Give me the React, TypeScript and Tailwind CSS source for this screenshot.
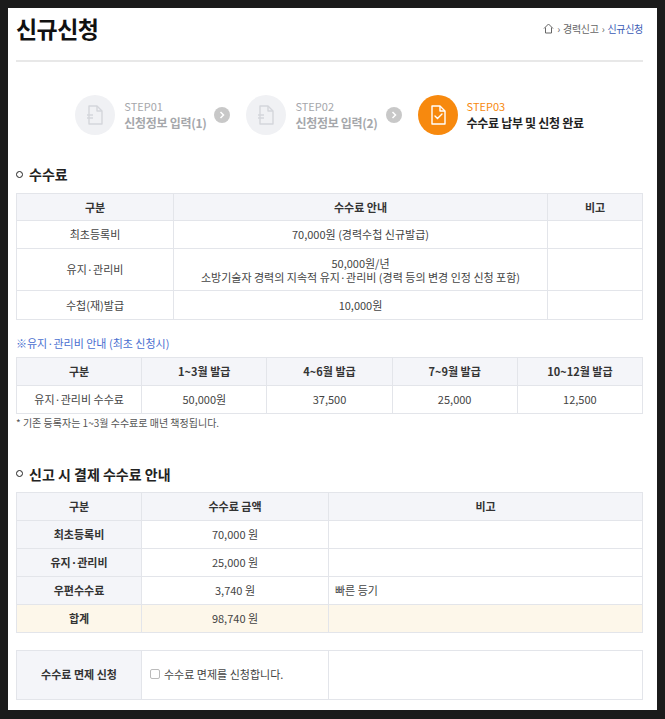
import React from "react";

const F = { fontFamily: '"Noto Sans CJK KR", "Noto Sans", sans-serif' };

function DocIcon({ color, check }: { color: string; check?: boolean }) {
  return (
    <svg width="20" height="22" viewBox="0 0 20 22" fill="none" stroke={color} strokeWidth="1.4">
      <path d="M4 2h8l5 5v13H4z" strokeLinejoin="round" />
      <path d="M12 2v5h5" strokeLinejoin="round" />
      {check ? <path d="M7 12l2.5 2.5L14 10" strokeLinecap="round" /> : <path d="M2 11h6M2 14h6" />}
    </svg>
  );
}

function Arrow() {
  return (
    <div className="w-[16px] h-[16px] rounded-full bg-[#c8c8c8] flex items-center justify-center ml-[8px] mr-[16px]">
      <svg width="6" height="8" viewBox="0 0 6 8" fill="none" stroke="#fff" strokeWidth="1.5"><path d="M1.5 1l3 3-3 3" /></svg>
    </div>
  );
}

function Step({ n, label, active }: { n: string; label: string; active?: boolean }) {
  return (
    <div className="flex items-center gap-[9px]">
      <div className={`w-[40px] h-[40px] rounded-full flex items-center justify-center ${active ? "bg-[#f7890e]" : "bg-[#f0f1f4]"}`}>
        <DocIcon color={active ? "#fff" : "#d4d6db"} check={active} />
      </div>
      <div>
        <div className={`text-[11px] leading-[16px] ${active ? "text-[#f7890e]" : "text-[#a5a7ab]"}`}>{n}</div>
        <div className={`text-[12px] leading-[18px] font-bold tracking-[-0.3px] ${active ? "text-[#222]" : "text-[#a5a7ab]"}`}>{label}</div>
      </div>
    </div>
  );
}

const th = "border border-[#e3e5ea] bg-[#f4f5f9] font-bold text-[#333] text-center";
const td = "border border-[#e3e5ea] text-[#444] text-center";

function SecTitle({ t }: { t: string }) {
  return (
    <div className="flex items-center gap-[6px] text-[14px] leading-[20px] font-bold text-[#222]">
      <span className="w-[7px] h-[7px] rounded-full border-[1.5px] border-[#222]" />
      {t}
    </div>
  );
}

export default function App() {
  return (
    <div style={F} className="w-[665px] h-[719px] bg-[#1b1b1b] pt-[8px] px-[8px] pb-[9px] overflow-hidden">
      <div className="bg-white h-full pl-[8px] pr-[14px]">
        <div className="flex justify-between items-center h-[40px]">
          <div className="text-[23px] font-bold text-[#111] tracking-tight">신규신청</div>
          <div className="flex items-center gap-[3px] text-[10px] text-[#666] tracking-[-0.3px]">
            <svg width="11" height="11" viewBox="0 0 11 11" fill="none" stroke="#666" strokeWidth="1"><path d="M1 5.5L5.5 1 10 5.5M2.5 4.5V10h6V4.5" /></svg>
            <span>›</span><span>경력신고</span><span>›</span><span className="text-[#3b5bb5]">신규신청</span>
          </div>
        </div>
        <div className="h-[2px] bg-[#e8e8e8] mt-[12px]" />
        <div className="flex items-center justify-center mt-[33px] h-[40px]">
          <Step n="STEP01" label="신청정보 입력(1)" />
          <Arrow />
          <Step n="STEP02" label="신청정보 입력(2)" />
          <Arrow />
          <Step n="STEP03" label="수수료 납부 및 신청 완료" active />
        </div>
        <div className="mt-[29px]"><SecTitle t="수수료" /></div>
        <table className="w-full mt-[9px] border-collapse text-[11px]">
          <colgroup><col className="w-[157px]" /><col /><col className="w-[95px]" /></colgroup>
          <tbody>
            <tr className="h-[27px]"><td className={th}>구분</td><td className={th}>수수료 안내</td><td className={th}>비고</td></tr>
            <tr className="h-[28px]"><td className={td}>최초등록비</td><td className={td}>70,000원 (경력수첩 신규발급)</td><td className={td} /></tr>
            <tr className="h-[42px]"><td className={td}>유지·관리비</td><td className={`${td} leading-[14px]`}>50,000원/년<br />소방기술자 경력의 지속적 유지·관리비 (경력 등의 변경 인정 신청 포함)</td><td className={td} /></tr>
            <tr className="h-[29px]"><td className={td}>수첩(재)발급</td><td className={td}>10,000원</td><td className={td} /></tr>
          </tbody>
        </table>
        <div className="text-[11px] text-[#4a6fd0] mt-[15px]">※유지·관리비 안내 (최초 신청시)</div>
        <table className="w-full mt-[5px] border-collapse text-[11px] table-fixed">
          <tbody>
            <tr className="h-[28px]"><td className={th}>구분</td><td className={th}>1~3월 발급</td><td className={th}>4~6월 발급</td><td className={th}>7~9월 발급</td><td className={th}>10~12월 발급</td></tr>
            <tr className="h-[28px]"><td className={td}>유지·관리비 수수료</td><td className={td}>50,000원</td><td className={td}>37,500</td><td className={td}>25,000</td><td className={td}>12,500</td></tr>
          </tbody>
        </table>
        <div className="text-[10px] text-[#555] mt-[1px]">* 기존 등록자는 1~3월 수수료로 매년 책정됩니다.</div>
        <div className="mt-[34px]"><SecTitle t="신고 시 결제 수수료 안내" /></div>
        <table className="w-full mt-[8px] border-collapse text-[11px]">
          <colgroup><col className="w-[125px]" /><col className="w-[187px]" /><col /></colgroup>
          <tbody>
            <tr className="h-[28px]"><td className={th}>구분</td><td className={th}>수수료 금액</td><td className={th}>비고</td></tr>
            <tr className="h-[28px]"><td className={th}>최초등록비</td><td className={td}>70,000 원</td><td className={td} /></tr>
            <tr className="h-[28px]"><td className={th}>유지·관리비</td><td className={td}>25,000 원</td><td className={td} /></tr>
            <tr className="h-[28px]"><td className={th}>우편수수료</td><td className={td}>3,740 원</td><td className={`${td} text-left pl-[6px]`}>빠른 등기</td></tr>
            <tr className="h-[28px] bg-[#fdf7ea]"><td className="border border-[#e3e5ea] bg-[#fdf7ea] font-bold text-[#333] text-center">합계</td><td className={td}>98,740 원</td><td className={td} /></tr>
          </tbody>
        </table>
        <table className="w-full mt-[17px] border-collapse text-[11px]">
          <colgroup><col className="w-[125px]" /><col className="w-[187px]" /><col /></colgroup>
          <tbody>
            <tr className="h-[49px]">
              <td className={th}>수수료 면제 신청</td>
              <td className={`${td} text-left pl-[8px]`}>
                <span className="inline-flex items-center gap-[4px]"><span className="w-[10px] h-[10px] border border-[#bbb] rounded-[2px]" />수수료 면제를 신청합니다.</span>
              </td>
              <td className={td} />
            </tr>
          </tbody>
        </table>
      </div>
    </div>
  );
}
